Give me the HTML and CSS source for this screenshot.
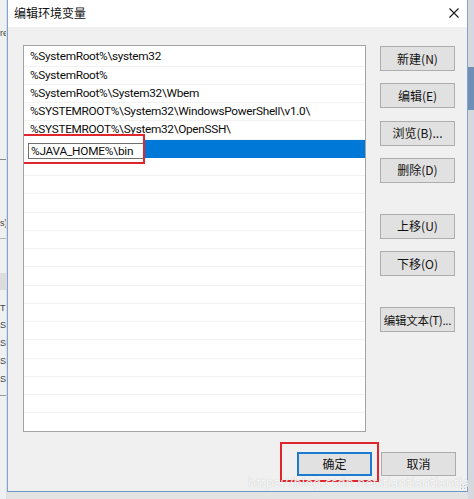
FILE: index.html
```html
<!DOCTYPE html>
<html lang="zh-CN">
<head>
<meta charset="utf-8">
<title>编辑环境变量</title>
<link rel="stylesheet" href="styles.css">
</head>
<body>
<div class="screen">
  <div class="bg-left">
    <span class="frag frag-re">re</span>
    <span class="hline hl1"></span>
    <span class="frag frag-s">s)</span>
    <span class="hline hl2"></span>
    <span class="band"></span>
    <span class="frag frag-t">T</span>
    <span class="frag frag-ss1">SS</span>
    <span class="frag frag-ss2">SS</span>
    <span class="frag frag-ss3">SS</span>
    <span class="frag frag-ss4">SS</span>
    <span class="hline hl3"></span>
  </div>

  <div class="dialog">
    <div class="titlebar">
      <span class="title">编辑环境变量</span>
      <svg class="close" width="10" height="10" viewBox="0 0 10 10">
        <path d="M0.5 0.5 L9.5 9.5 M9.5 0.5 L0.5 9.5" stroke="#1a1a1a" stroke-width="1.1" fill="none"/>
      </svg>
    </div>

    <div class="body">
      <div class="main">
        <div class="listbox">
          <div class="row">%SystemRoot%\system32</div>
          <div class="row">%SystemRoot%</div>
          <div class="row">%SystemRoot%\System32\Wbem</div>
          <div class="row">%SYSTEMROOT%\System32\WindowsPowerShell\v1.0\</div>
          <div class="row">%SYSTEMROOT%\System32\OpenSSH\</div>
          <div class="row selected"></div>
          <div class="row"></div>
          <div class="row"></div>
          <div class="row"></div>
          <div class="row"></div>
          <div class="row"></div>
          <div class="row"></div>
          <div class="row"></div>
          <div class="row"></div>
          <div class="row"></div>
          <div class="row"></div>
          <div class="row"></div>
          <div class="row"></div>
          <div class="row"></div>
          <div class="row"></div>
          <div class="row last"></div>

          <div class="mark mark-edit">
            <div class="edit-input">%JAVA_HOME%\bin</div>
          </div>
        </div>

        <div class="side">
          <button class="btn">新建(N)</button>
          <button class="btn">编辑(E)</button>
          <button class="btn">浏览(B)...</button>
          <button class="btn">删除(D)</button>
          <button class="btn group">上移(U)</button>
          <button class="btn">下移(O)</button>
          <button class="btn group btn-long">编辑文本(T)...</button>
        </div>
      </div>

      <div class="footer">
        <div class="ok-wrap">
          <button class="btn btn-default">确定</button>
          <span class="mark mark-ok"></span>
        </div>
        <button class="btn">取消</button>
      </div>
    </div>

    <div class="watermark">https://blog.csdn.net/tiantiantiantiantia</div>
    <div class="grip"></div>
  </div>

  <div class="bg-right">
    <span class="blue-block"></span>
  </div>
</div>
</body>
</html>
```

FILE: styles.css
```css
* {
  box-sizing: border-box;
}

html, body {
  margin: 0;
  padding: 0;
}

body {
  width: 474px;
  height: 499px;
  overflow: hidden;
  background: #e4e4e4;
  font-family: "Noto Sans CJK SC", "Noto Sans", sans-serif;
  font-size: 12px;
  color: #000;
}

.screen {
  display: flex;
  align-items: flex-start;
  width: 474px;
  height: 499px;
  background: #e3e3e3;
}

/* background window (left) */
.bg-left {
  position: relative;
  width: 7px;
  height: 499px;
  background: #eef0f2;
  overflow: hidden;
  border-right: 1px solid #d9dde3;
}

.frag {
  position: absolute;
  left: 0;
  font-family: "Liberation Sans", sans-serif;
  font-size: 9px;
  line-height: 10px;
  color: #444;
  white-space: nowrap;
}

.frag-re { top: 28px; }
.frag-s { top: 218px; }
.frag-t { top: 303px; }
.frag-ss1 { top: 320px; }
.frag-ss2 { top: 338px; }
.frag-ss3 { top: 356px; }
.frag-ss4 { top: 374px; }

.hline {
  position: absolute;
  left: 0;
  right: 0;
  height: 1px;
  background: #8a8a8a;
}

.hl1 { top: 159px; }
.hl2 { top: 238px; background: #b5b5b5; }
.hl3 { top: 395px; background: #9a9a9a; }

.band {
  position: absolute;
  left: 0;
  right: 0;
  top: 273px;
  height: 17px;
  background: #dcdcdc;
}

/* dialog */
.dialog {
  position: relative;
  width: 461px;
  height: 492px;
  background: #f0f0f0;
  border-left: 1px solid #7ea4d3;
  border-right: 1px solid #7ea4d3;
  border-bottom: 1px solid #6d95c8;
  display: flex;
  flex-direction: column;
}

.titlebar {
  height: 27px;
  background: #fff;
  display: flex;
  align-items: center;
  justify-content: space-between;
  padding: 0 8px 1px 6px;
}

.title {
  font-size: 12px;
  color: #111;
  line-height: 14px;
}

.close {
  display: block;
  margin-bottom: 1px;
}

.body {
  flex: 1;
  padding: 18px 11px 15px 15px;
  display: flex;
  flex-direction: column;
}

.main {
  display: flex;
  gap: 14px;
}

.listbox {
  position: relative;
  width: 343px;
  height: 387px;
  background: #fff;
  border: 1px solid #a3a3a3;
  padding-top: 2.4px;
  overflow: hidden;
}

.row {
  height: 18.25px;
  line-height: 17px;
  padding-left: 6px;
  border-bottom: 1px solid #f2f2f2;
  font-family: Roboto, sans-serif;
  font-size: 11.8px;
  letter-spacing: -0.3px;
  color: #0c0c0c;
  white-space: nowrap;
  overflow: hidden;
}

.row.selected {
  background: #0078d7;
  border-bottom-color: #0078d7;
}

/* annotation rectangles (drawn over the screenshot) */
.mark {
  position: absolute;
  border: 2px solid #e0262c;
}

.mark-edit {
  left: -5px;
  top: 88px;
  width: 126px;
  height: 30px;
  background: #fff;
  padding: 7px 0 0 7px;
}

.edit-input {
  width: 115px;
  height: 16px;
  border: 1px solid #6f6f6f;
  border-right: none;
  padding-left: 2px;
  font-family: Roboto, sans-serif;
  font-size: 11.8px;
  letter-spacing: -0.2px;
  line-height: 14px;
  color: #0c0c0c;
  white-space: nowrap;
}

.side {
  width: 75px;
  display: flex;
  flex-direction: column;
  gap: 12.3px;
  padding-top: 1px;
}

.btn {
  width: 75px;
  height: 25px;
  margin: 0;
  padding: 0;
  background: #e1e1e1;
  border: 1px solid #adadad;
  font-family: "Noto Sans CJK SC", "Noto Sans", sans-serif;
  font-size: 12px;
  color: #111;
  line-height: 22px;
  text-align: center;
  white-space: nowrap;
}

.btn.group {
  margin-top: 18.7px;
}

.btn-long {
  font-size: 11.5px;
  letter-spacing: -0.3px;
}

.footer {
  margin-top: 20px;
  display: flex;
  justify-content: flex-end;
  gap: 9px;
}

.footer .btn {
  height: 24px;
}

.ok-wrap {
  position: relative;
}

.btn-default {
  display: block;
  border: 2px solid #1a7bd0;
  line-height: 20px;
}

.mark-ok {
  left: -17px;
  top: -10px;
  width: 99px;
  height: 40px;
}

.watermark {
  position: absolute;
  left: 240px;
  top: 475px;
  font-family: "Noto Sans", sans-serif;
  font-size: 13px;
  line-height: 14px;
  color: rgba(255, 255, 255, 0.9);
  text-shadow: 0 0 1px rgba(110, 110, 110, 0.45);
  white-space: nowrap;
  letter-spacing: 0.1px;
}

.grip {
  position: absolute;
  right: 1px;
  bottom: 1px;
  width: 6px;
  height: 6px;
  background-image: radial-gradient(circle, #b8b8b8 0.8px, transparent 1px);
  background-size: 3px 3px;
}

/* background window (right) */
.bg-right {
  position: relative;
  width: 6px;
  height: 499px;
  background: #d5d8dc;
}

.blue-block {
  position: absolute;
  left: 0;
  right: 0;
  top: 67px;
  height: 43px;
  background: #6f8fb4;
}
```
